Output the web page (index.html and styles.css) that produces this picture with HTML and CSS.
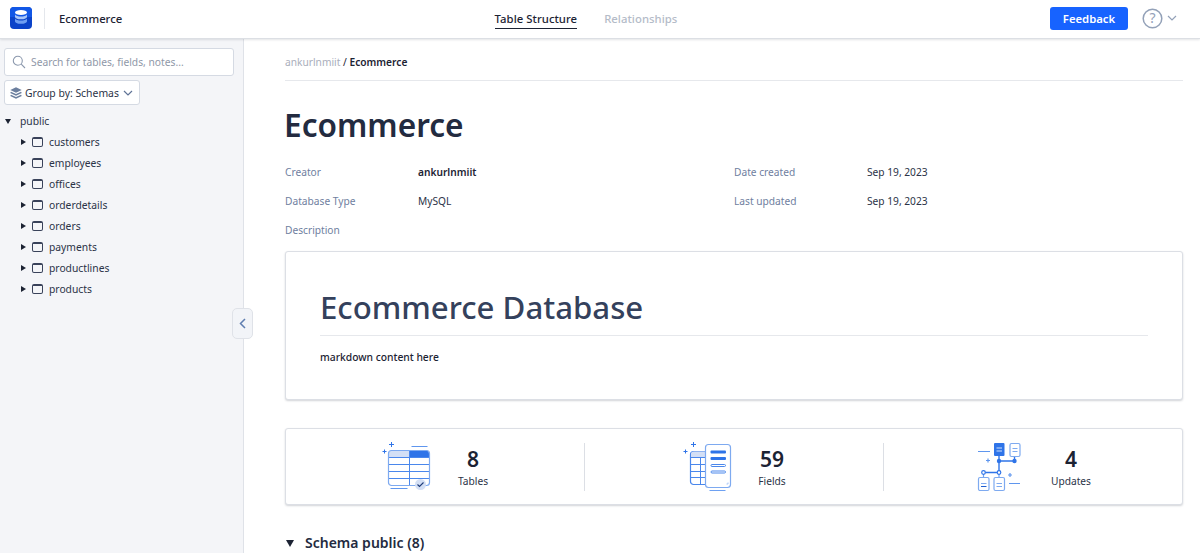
FILE: index.html
```html
<!DOCTYPE html>
<html lang="en">
<head>
<meta charset="utf-8">
<title>Ecommerce</title>
<link rel="stylesheet" href="styles.css">
</head>
<body>
<header class="topbar">
  <div class="brand">
    <svg class="logo" width="22" height="22" viewBox="0 0 22 22"><rect width="22" height="22" rx="4" fill="#0b43c9"/><path d="M0 4a4 4 0 0 1 4-4h14a4 4 0 0 1 4 4v6H0z" fill="#1257e6"/><ellipse cx="11" cy="5.5" rx="6" ry="2.6" fill="#fff"/><path d="M5 7.5v2.2c0 1.4 2.7 2.6 6 2.6s6-1.2 6-2.6V7.5c-1 1.4-3.400 2-6 2s-5-.6-6-2z" fill="#a9c6f8"/><path d="M5 11.500v2.700c0 1.400 2.700 2.600 6 2.600s6-1.200 6-2.600v-2.700c-1 1.400-3.400 2-6 2s-5-.6-6-2z" fill="#6f9ff2"/></svg>
    <span class="brand-sep"></span>
    <span class="brand-name">Ecommerce</span>
  </div>
  <nav class="tabs">
    <span class="tab tab-active">Table Structure</span>
    <span class="tab tab-muted">Relationships</span>
  </nav>
  <div class="top-actions">
    <button class="feedback">Feedback</button>
    <svg class="help" width="21" height="21" viewBox="0 0 21 21"><circle cx="10.500" cy="10.500" r="9.300" fill="none" stroke="#93a1b8" stroke-width="1.500"/><text x="10.500" y="15.200" text-anchor="middle" class="help-q">?</text></svg>
    <svg class="chev" width="10" height="6" viewBox="0 0 10 6"><path d="M1 1l4 4 4-4" fill="none" stroke="#93a1b8" stroke-width="1.200"/></svg>
  </div>
</header>
<div class="layout">
  <aside class="sidebar">
    <div class="search">
      <svg width="14" height="14" viewBox="0 0 14 14"><circle cx="5.800" cy="5.800" r="4.500" fill="none" stroke="#8b98ad" stroke-width="1.100"/><path d="M9.200 9.200l3.800 3.800" stroke="#8b98ad" stroke-width="1.100"/></svg>
      <span class="search-text">Search for tables, fields, notes...</span>
    </div>
    <button class="group-by">
      <svg class="layers" width="12" height="12" viewBox="0 0 12 12"><path d="M6 .3l5.700 2.700L6 5.700 .3 3z" fill="#6c7f9e"/><path d="M1 4.700L6 7.100l5-2.400 .8 1.200L6 8.700 .2 5.900z" fill="#6c7f9e"/><path d="M1 7.700l5 2.400 5-2.400 .8 1.200L6 11.700 .2 8.900z" fill="#6c7f9e"/></svg>
      <span>Group by: Schemas</span>
      <svg width="10" height="6" viewBox="0 0 10 6"><path d="M1 1l4 4 4-4" fill="none" stroke="#5f7396" stroke-width="1.200"/></svg>
    </button>
    <div class="tree-root"><span class="arrow-down"></span><span>public</span></div>
    <ul class="tree">
      <li class="tree-item"><span class="arrow-right"></span><span class="tbl-icon"></span><span>customers</span></li>
      <li class="tree-item"><span class="arrow-right"></span><span class="tbl-icon"></span><span>employees</span></li>
      <li class="tree-item"><span class="arrow-right"></span><span class="tbl-icon"></span><span>offices</span></li>
      <li class="tree-item"><span class="arrow-right"></span><span class="tbl-icon"></span><span>orderdetails</span></li>
      <li class="tree-item"><span class="arrow-right"></span><span class="tbl-icon"></span><span>orders</span></li>
      <li class="tree-item"><span class="arrow-right"></span><span class="tbl-icon"></span><span>payments</span></li>
      <li class="tree-item"><span class="arrow-right"></span><span class="tbl-icon"></span><span>productlines</span></li>
      <li class="tree-item"><span class="arrow-right"></span><span class="tbl-icon"></span><span>products</span></li>
    </ul>
    <button class="collapse"><svg width="7" height="11" viewBox="0 0 7 11"><path d="M6 1L1.500 5.500 6 10" fill="none" stroke="#5f7eb0" stroke-width="1.500"/></svg></button>
  </aside>
  <main class="main">
    <div class="crumbs"><span class="crumb-user">ankurlnmiit</span> <span class="crumb-sep">/</span> <b>Ecommerce</b></div>
    <h1 class="title">Ecommerce</h1>
    <div class="meta">
      <span class="meta-label">Creator</span><b class="meta-val">ankurlnmiit</b>
      <span class="meta-label">Date created</span><span class="meta-val">Sep 19, 2023</span>
      <span class="meta-label">Database Type</span><span class="meta-val">MySQL</span>
      <span class="meta-label">Last updated</span><span class="meta-val">Sep 19, 2023</span>
      <span class="meta-label">Description</span>
    </div>
    <section class="card markdown">
      <h2 class="md-title">Ecommerce Database</h2>
      <p class="md-text">markdown content here</p>
    </section>
    <section class="card stats">
      <div class="stat">
        <svg class="stat-icon" width="54" height="54" viewBox="0 0 54 54" fill="none">
          <path d="M9.500 2v5M7 4.500h5M2.500 9.500v4M.5 11.500h4" stroke="#2f74e8"/><path d="M29.500 6.500h16M8.500 48.500h17" stroke="#5f96ee"/>
          <rect x="6.500" y="10.500" width="41" height="35" rx="3" fill="#fff"/>
          <path d="M7 13.500a3 3 0 0 1 3-3h17.500v7H7z" fill="#d3dff5"/><path d="M27.500 10.500H44a3 3 0 0 1 3 3v4H27.500z" fill="#2f74e8"/>
          <path d="M7 17.500h40M7 24.500h40M7 31.500h40M7 38.500h40M27.500 10.500v35" stroke="#4a87ec"/>
          <rect x="6.500" y="10.500" width="41" height="35" rx="3" stroke="#7eaaf0" stroke-width="1.200"/>
          <circle cx="38.500" cy="44.500" r="5.500" fill="#d3dff5"/><path d="M35.500 44.500l2 2 4-4" stroke="#1f3c78" stroke-width="1.100"/>
        </svg>
        <div class="stat-text"><span class="stat-num">8</span><span class="stat-label">Tables</span></div>
      </div>
      <div class="stat">
        <svg class="stat-icon" width="54" height="54" viewBox="0 0 54 54" fill="none">
          <path d="M11.500 2v5M9 4.500h5M3.500 9.500v4M1.500 11.500h4" stroke="#2f74e8"/>
          <path d="M8.500 14.500a3 3 0 0 1 3-3H24v33H11.500a3 3 0 0 1-3-3z" fill="#fff" stroke="#4a87ec" stroke-width="1.200"/>
          <path d="M9 14.500a3 3 0 0 1 3-3h12v6H9z" fill="#d3dff5"/><path d="M8.500 17.500H24M8.500 24.500H24M8.500 31.500H24M8.500 37.500H24M18.500 17.500v27" stroke="#4a87ec"/>
          <rect x="23.500" y="4.500" width="25" height="43" rx="3" fill="#fff" stroke="#7eaaf0" stroke-width="1.200"/>
          <rect x="28.500" y="10.500" width="15.500" height="3" rx="1" fill="#2f74e8"/><rect x="28.500" y="17" width="15.500" height="3" rx="1" fill="#2f74e8"/>
          <rect x="29" y="24.500" width="14.500" height="2" rx="1" stroke="#4a87ec"/><rect x="29" y="31" width="14.500" height="2" rx="1" stroke="#4a87ec"/>
          <path d="M44.500 44h1.500v-1.500" stroke="#a9c6f8"/><path d="M27.500 50.500h16" stroke="#6ea1f2"/>
        </svg>
        <div class="stat-text"><span class="stat-num">59</span><span class="stat-label">Fields</span></div>
      </div>
      <div class="stat">
        <svg class="stat-icon" width="54" height="54" viewBox="-1.500 0 54 54" fill="none">
          <path d="M1.500 11.500h12M11.500 18.500v4M9.500 20.500h4M33.500 33v4M31.500 35h4M32.500 43.500h11" stroke="#5f96ee" stroke-width="1.200"/>
          <path d="M22.500 16v16.500M22.500 21H38M38 16v5M7 32.500h15.500" stroke="#2f74e8" stroke-width="1.400"/>
          <path d="M7 32.500v5M22.500 32.500v5" stroke="#6ea1f2" stroke-width="1.200"/>
          <rect x="17.500" y="3" width="10.500" height="13" rx="1" fill="#2f74e8"/><path d="M20 8h5.500M20 11h5.500" stroke="#cfe0fb"/>
          <rect x="33.500" y="3.500" width="10" height="13" rx="1.500" fill="#fff" stroke="#7eaaf0" stroke-width="1.200"/><path d="M36 8.500h5M36 11.500h5" stroke="#7eaaf0"/>
          <circle cx="22.500" cy="21" r="2.200" fill="#2f74e8"/><circle cx="38" cy="21" r="2.200" fill="#2f74e8"/>
          <circle cx="7" cy="32.500" r="1.800" fill="#fff" stroke="#2f74e8" stroke-width="1.200"/><circle cx="22.500" cy="32.500" r="1.800" fill="#fff" stroke="#2f74e8" stroke-width="1.200"/>
          <rect x="2" y="37.500" width="10.500" height="13" rx="1.500" fill="#fff" stroke="#7eaaf0" stroke-width="1.200"/><path d="M4.500 43.500h5.500" stroke="#7eaaf0"/><path d="M4.500 46.500h5.500" stroke="#1f5ed0"/>
          <rect x="17.500" y="37.500" width="10.500" height="13" rx="1.500" fill="#fff" stroke="#7eaaf0" stroke-width="1.200"/><path d="M20 43.500h5.500M20 46.500h5.500" stroke="#7eaaf0"/>
        </svg>
        <div class="stat-text"><span class="stat-num">4</span><span class="stat-label">Updates</span></div>
      </div>
    </section>
    <div class="schema-head"><span class="schema-arrow"></span><span>Schema public (8)</span></div>
  </main>
</div>
</body>
</html>
```
FILE: styles.css
```css
* { box-sizing: border-box; }
html, body { margin: 0; height: 553px; overflow: hidden; }
body { font-family: "Noto Sans", "Open Sans", sans-serif; color: #1c2333; background: #fff; font-size: 11px; }
button { font-family: inherit; }
ul { list-style: none; margin: 0; padding: 0; }

.topbar { height: 39px; display: flex; align-items: center; justify-content: space-between; padding: 0 23px 2px 10px; border-bottom: 1px solid #dcdfe4; box-shadow: 0 1px 2px rgba(30,40,60,.12); position: relative; z-index: 2; background: #fff; }
.brand { display: flex; align-items: center; width: 320px; }
.brand-sep { width: 1px; height: 21px; background: #e4e7ec; margin: 0 14px 0 12px; }
.brand-name { font-size: 11.300px; font-weight: 500; color: #1c2333; }
.tabs { display: flex; gap: 27px; margin-right: 15px; }
.tab { font-size: 11.300px; font-weight: 500; letter-spacing: .05px; height: 21px; line-height: 21px; }
.tab-active { border-bottom: 1.500px solid #1c2333; color: #1c2333; }
.tab-muted { color: #b4bbc8; }
.top-actions { display: flex; align-items: center; justify-content: flex-end; width: 320px; }
.feedback { width: 78px; height: 23px; background: #1763ff; color: #fff; border: 0; border-radius: 3px; font-size: 11.300px; font-weight: 600; margin-right: 14px; padding: 0; }
.help { margin-right: 4px; }
.help-q { font-size: 14px; fill: #93a1b8; font-family: "Noto Sans", sans-serif; }

.layout { display: flex; height: 514px; }
.sidebar { width: 244px; flex: none; background: #f4f5f8; border-right: 1px solid #dfe2e8; padding: 9px 9px 0 4px; position: relative; }
.search { height: 28px; width: 230px; background: #fff; border: 1px solid #d5dae3; border-radius: 3px; display: flex; align-items: center; padding-left: 7px; gap: 5px; margin-bottom: 4px; }
.search-text { color: #8f98a8; font-size: 10.250px; }
.group-by { height: 25px; width: 136px; background: #fff; border: 1px solid #d5dae3; border-radius: 3px; display: flex; align-items: center; padding: 0 0 0 5px; gap: 3px; font-size: 10.400px; color: #2b3347; white-space: nowrap; }
.group-by span { margin-right: 1px; }
.layers { flex: none; }
.tree-root { display: flex; align-items: center; margin-top: 7px; height: 18px; font-size: 10.300px; color: #2b3347; }
.arrow-down { width: 0; height: 0; border-left: 3px solid transparent; border-right: 3px solid transparent; border-top: 5px solid #1c2333; margin: 0 9px 0 1px; }
.tree { margin-top: 2px; }
.tree-item { display: flex; align-items: center; height: 20.900px; padding-left: 17px; font-size: 10.300px; color: #2b3347; }
.arrow-right { width: 0; height: 0; border-top: 3px solid transparent; border-bottom: 3px solid transparent; border-left: 5px solid #1c2333; margin-right: 6px; }
.tbl-icon { width: 11px; height: 10px; border: 1px solid #39425a; border-top-width: 2px; border-radius: 2px; margin-right: 6px; }
.collapse { position: absolute; left: 232px; top: 269px; width: 21px; height: 31px; background: #f2f4f8; border: 1px solid #dfe2e8; border-radius: 5px; display: flex; align-items: center; justify-content: center; padding: 0; }

.main { flex: 1; padding: 0 17px 0 41px; min-width: 0; }
.crumbs { height: 42px; padding-top: 15px; font-size: 10.200px; border-bottom: 1px solid #e6e8ec; line-height: 17px; }
.crumb-user { color: #a9aebb; }
.crumbs b { font-weight: 600; }
.title { margin: 22px 0 0 -1px; font-size: 31.600px; font-weight: 600; line-height: 44px; color: #232b40; }
.meta { display: grid; grid-template-columns: 133px 316px 133px 1fr; grid-auto-rows: 29px; margin-top: 10px; align-items: center; font-size: 10.200px; }
.meta-label { color: #6f80a0; }
.meta-val { color: #2b3347; font-weight: 400; }
b.meta-val { font-weight: 600; color: #1c2333; }
.card { border: 1px solid #dcdfe5; border-radius: 3px; box-shadow: 0 1px 2px rgba(30,40,60,.2); background: #fff; }
.markdown { height: 149px; margin-top: 7px; padding: 33px 34px 0; }
.md-title { margin: 0; font-size: 31.200px; font-weight: 500; color: #34415c; line-height: 44px; padding-bottom: 6px; border-bottom: 1px solid #e6e8ec; }
.md-text { margin: 13px 0 0; font-size: 10.300px; color: #1c2333; font-weight: 500; line-height: 16px; }
.stats { height: 77px; margin-top: 28px; display: flex; align-items: center; }
.stat { flex: 1; height: 48px; display: flex; align-items: center; justify-content: center; gap: 22px; border-left: 1px solid #dcdfe5; }
.stat:first-child { border-left: 0; }
.stat-icon { flex: none; }
.stat-text { display: flex; flex-direction: column; align-items: center; }
.stat-num { font-size: 21px; font-weight: 600; line-height: 28px; margin-top: 1px; color: #1c2333; }
.stat-label { font-size: 10.200px; line-height: 16px; color: #2b3347; }
.schema-head { display: flex; align-items: center; margin-top: 28px; font-size: 14px; font-weight: 600; color: #232b40; line-height: 20px; }
.schema-arrow { width: 0; height: 0; border-left: 4.500px solid transparent; border-right: 4.500px solid transparent; border-top: 7px solid #1c2333; margin: 0 11px 0 1px; }
```
